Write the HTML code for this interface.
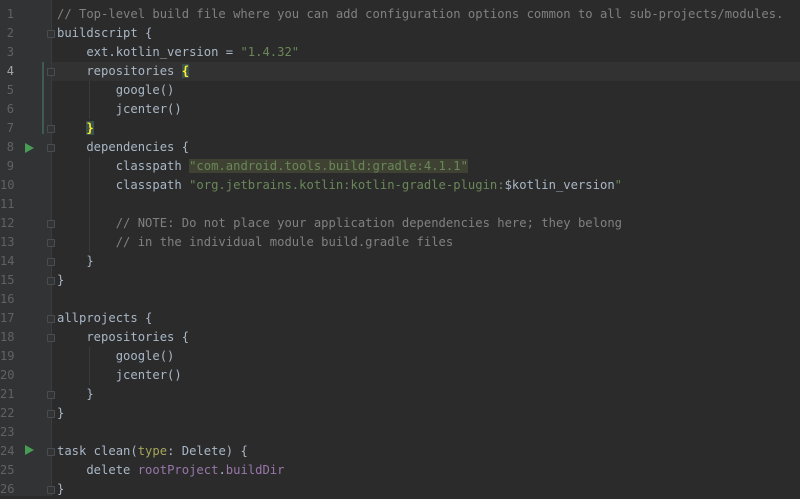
<!DOCTYPE html>
<html><head><style>
html,body{margin:0;padding:0;background:#2b2b2b;width:800px;height:496px;overflow:hidden}
.g{position:absolute;left:0;top:0;width:52px;height:496px;background:#313335}
.gl{position:absolute;left:51px;top:0;width:1px;height:496px;background:#3a3c3e}
.cur{position:absolute;left:52px;right:0;top:62px;height:19px;background:#323232}
.ln{position:absolute;left:0;top:5px;width:14px;text-align:right;font:12px/19px "DejaVu Sans Mono",monospace;color:#606366;white-space:pre}
.code{position:absolute;left:57px;top:5px;font:12.2px/19px "DejaVu Sans Mono",monospace;color:#a9b7c6;white-space:pre}
.c{color:#808080}.s{color:#6a8759}.p{color:#9876aa}.n{color:#a5a55c}
.hs{background:#3f4232}
.br{color:#ffef28;background:#3b514d;font-weight:bold}
.run{position:absolute;left:25px;width:0;height:0;border-left:9px solid #499c54;border-top:5px solid transparent;border-bottom:5px solid transparent}
.fold{position:absolute;left:47px;width:6px;height:6px;border:1px solid #4a4d4f;border-radius:1px;background:#313335}
.chg{position:absolute;left:42px;top:62px;width:2px;height:72px;background:#3d5b55}
.guide{position:absolute;width:1px;background:#3b3b3b}
</style></head><body>
<div class="g"></div><div class="gl"></div><div class="cur"></div><div class="chg"></div>
<div class="guide" style="left:89px;top:81px;height:38px"></div>
<div class="guide" style="left:89px;top:157px;height:95px"></div>
<div class="guide" style="left:89px;top:347px;height:38px"></div>
<div class="ln">1
2
3
<span style="color:#a4a3a3">4</span>
5
6
7
8
9
10
11
12
13
14
15
16
17
18
19
20
21
22
23
24
25
26</div>
<div class="run" style="top:143px"></div>
<div class="run" style="top:445px"></div>
<div class="fold" style="top:30px"></div>
<div class="fold" style="top:68px"></div>
<div class="fold" style="top:125px"></div>
<div class="fold" style="top:144px"></div>
<div class="fold" style="top:220px"></div>
<div class="fold" style="top:239px"></div>
<div class="fold" style="top:258px"></div>
<div class="fold" style="top:277px"></div>
<div class="fold" style="top:315px"></div>
<div class="fold" style="top:334px"></div>
<div class="fold" style="top:391px"></div>
<div class="fold" style="top:410px"></div>
<div class="fold" style="top:448px"></div>
<div class="fold" style="top:486px"></div>
<div class="code"><span class="c">// Top-level build file where you can add configuration options common to all sub-projects/modules.</span>
buildscript {
    ext.kotlin_version = <span class="s">"1.4.32"</span>
    repositories <span class="br">{</span>
        google()
        jcenter()
    <span class="br">}</span>
    dependencies {
        classpath <span class="s hs">"com.android.tools.build:gradle:4.1.1"</span>
        classpath <span class="s">"org.jetbrains.kotlin:kotlin-gradle-plugin:</span>$kotlin_version<span class="s">"</span>

        <span class="c">// NOTE: Do not place your application dependencies here; they belong</span>
        <span class="c">// in the individual module build.gradle files</span>
    }
}

allprojects {
    repositories {
        google()
        jcenter()
    }
}

task clean(<span class="n">type</span>: Delete) {
    delete <span class="p">rootProject</span>.<span class="p">buildDir</span>
}</div>
</body></html>
